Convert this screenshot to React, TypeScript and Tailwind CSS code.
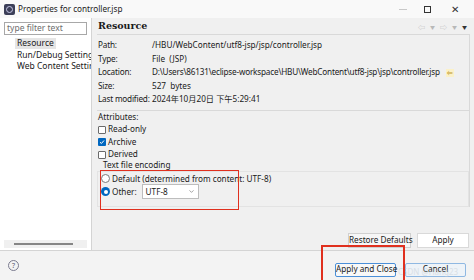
import { ChevronDown } from "lucide-react";

const font = { fontFamily: '"Noto Sans", "Noto Sans CJK SC", sans-serif' };

function Check({ checked }: { checked?: boolean }) {
  return checked ? (
    <span className="flex h-[8px] w-[8px] items-center justify-center rounded-[1px] bg-[#0067c0]">
      <svg width="6" height="6" viewBox="0 0 6 6">
        <path d="M1 3.2 L2.4 4.5 L5 1.5" stroke="white" strokeWidth="1" fill="none" />
      </svg>
    </span>
  ) : (
    <span className="h-[8px] w-[8px] rounded-[1px] border border-[#6b6b6b] bg-white" />
  );
}

function Radio({ on }: { on?: boolean }) {
  return on ? (
    <span className="flex h-[9px] w-[9px] items-center justify-center rounded-full bg-[#0067c0]">
      <span className="h-[4px] w-[4px] rounded-full bg-white" />
    </span>
  ) : (
    <span className="h-[9px] w-[9px] rounded-full border border-[#7a7a7a] bg-white" />
  );
}

const infoRows: [string, string][] = [
  ["Path:", "/HBU/WebContent/utf8-jsp/jsp/controller.jsp"],
  ["Type:", "File  (JSP)"],
  ["Location:", "D:\\Users\\86131\\eclipse-workspace\\HBU\\WebContent\\utf8-jsp\\jsp\\controller.jsp"],
  ["Size:", "527  bytes"],
  ["Last modified:", "2024年10月20日 下午5:29:41"],
];

export default function App() {
  return (
    <div
      className="relative flex h-[280px] w-[474px] flex-col overflow-hidden whitespace-pre bg-[#f0f0f0] text-[8.2px] leading-none text-[#1a1a1a]"
      style={font}
    >
      {/* title bar */}
      <div className="flex h-[18px] shrink-0 items-center bg-[#f9f9f9] pl-[4px]">
        <span className="flex h-[11px] w-[11px] items-center justify-center rounded-[2px] bg-[#3c3f58]">
          <span className="h-[7px] w-[7px] rounded-full border-[1.5px] border-[#c9c9e8]" />
        </span>
        <span className="ml-[3px] text-[8.2px] text-[#222]">Properties for controller.jsp</span>
        <div className="ml-auto flex items-center pr-[15px]">
          <span className="h-px w-[8px] bg-[#c8c8c8]" />
          <span className="ml-[17px] h-[7px] w-[7px] border border-[#333]" />
          <span className="ml-[20px] text-[10px] font-light text-[#333]">✕</span>
        </div>
      </div>

      {/* body */}
      <div className="flex h-[232px] shrink-0">
        <div className="flex w-[92px] shrink-0 flex-col overflow-hidden border-r border-[#d4d4d4] bg-white pl-[4px] pr-[4px] pt-[4px]">
          <div className="flex h-[13px] items-center border border-[#a8a8a8] px-[2px] text-[8.5px] text-[#6d6d6d]">type filter text</div>
          <div className="mt-[3px] flex flex-col gap-[1px] pl-[11px] text-[8.5px]">
            <span className="w-fit bg-[#e5e5e5] px-[2px] py-[1px]">Resource</span>
            <span className="px-[2px] py-[1px]">Run/Debug Setting</span>
            <span className="px-[2px] py-[1px]">Web Content Settir</span>
          </div>
          <div className="mt-auto mb-[2px] flex h-[8px] items-center bg-[#f0f0f0] pl-[10px] pr-[14px]">
            <span className="h-[2px] w-full bg-[#858585]" />
          </div>
        </div>

        <div className="flex min-w-0 flex-1 flex-col overflow-hidden pl-[5px] pr-[4px]">
          <div className="flex h-[17px] shrink-0 items-center border-b border-[#d9d9d9] pl-[1px]">
            <span className="text-[9.5px] font-bold" style={{ fontFamily: '"DejaVu Serif", serif' }}>Resource</span>
            <div className="ml-auto flex items-center gap-[5px] pr-[3px] pt-[3px] text-[7px] text-[#b8b8b8]">
              <span>⇦</span>
              <span className="text-[5px]">▼</span>
              <span>⇨</span>
              <span className="text-[5px]">▼</span>
              <span className="text-[5px] text-[#333]">▼</span>
            </div>
          </div>
          <div className="flex flex-col gap-[4.5px] border-r border-[#d9d9d9] pt-[6px]">
            {infoRows.map(([k, v]) => (
              <div key={k} className="flex h-[9px] items-center">
                <span className="w-[55px] shrink-0 pl-[1px] tracking-[-0.2px]">{k}</span>
                <span className={k === "Location:" ? "tracking-[-0.2px]" : ""}>{v}</span>
                {k === "Location:" && (
                  <span className="ml-[6px] flex h-[8px] w-[8px] shrink-0 items-center justify-center bg-[#fbf1c8] text-[6px] text-[#c39a2c]">⇐</span>
                )}
              </div>
            ))}
            <div className="mt-[1px] border-t border-[#d9d9d9] pt-[2px]">
              <div className="flex flex-col gap-[3.5px] pl-[1px]">
                <span className="h-[9px]">Attributes:</span>
                <div className="flex h-[9px] items-center gap-[2px]"><Check />Read-only</div>
                <div className="flex h-[9px] items-center gap-[2px]"><Check checked />Archive</div>
                <div className="flex h-[9px] items-center gap-[2px]"><Check />Derived</div>
              </div>
              <div className="mt-[2px] pl-[6px]">Text file encoding</div>
              <div className="mt-[2px] flex h-[36px] flex-col gap-[1px] border border-[#e3e3e3] pl-[3px] pt-[2px]">
                <div className="flex h-[9px] items-center gap-[2px]"><Radio />Default (determined from content: UTF-8)</div>
                <div className="flex items-center gap-[2px]">
                  <Radio on />
                  <span>Other:</span>
                  <div className="ml-[3px] flex h-[15px] w-[57px] items-center justify-between border border-[#bdbdbd] bg-white pl-[3px] pr-[3px]">
                    <span>UTF-8</span>
                    <ChevronDown size={7} color="#666" />
                  </div>
                </div>
              </div>
            </div>
          </div>
          <div className="mt-auto mb-[2px] flex justify-end gap-[6px] pr-[1px]">
            <button className="h-[15px] w-[63px] border border-[#d0d0d0] bg-[#f6f6f6]">Restore Defaults</button>
            <button className="h-[15px] w-[52px] border border-[#d9d9d9] bg-white">Apply</button>
          </div>
        </div>
      </div>

      {/* footer */}
      <div className="flex flex-1 items-center border-t border-[#d4d4d4] bg-[#f3f3f3] pl-[8px] pr-[8px]">
        <span className="flex h-[11px] w-[11px] items-center justify-center rounded-full border border-[#7b7b8f] text-[7px] text-[#5a5a70]">?</span>
        <div className="ml-auto mt-[8px] flex gap-[9px]">
          <button className="h-[14px] w-[61px] rounded-[2px] border border-[#4a8fd8] bg-[#f8f8f8]">Apply and Close</button>
          <button className="relative h-[14px] w-[61px] rounded-[2px] border border-[#8fb8e2] bg-[#eef3f8]">
            Cancel
            <span className="absolute left-[-8px] top-[4px] text-[8px] text-[#c4ccd4] opacity-50">CSDN @Hang23</span>
          </button>
        </div>
      </div>

      {/* red annotation boxes */}
      <div className="pointer-events-none absolute left-[100px] top-[170px] h-[40px] w-[139px] border-[1.5px] border-[#e0301e]" />
      <div className="pointer-events-none absolute left-[321px] top-[245px] h-[40px] w-[84px] border-[2px] border-[#e0301e]" />
    </div>
  );
}
